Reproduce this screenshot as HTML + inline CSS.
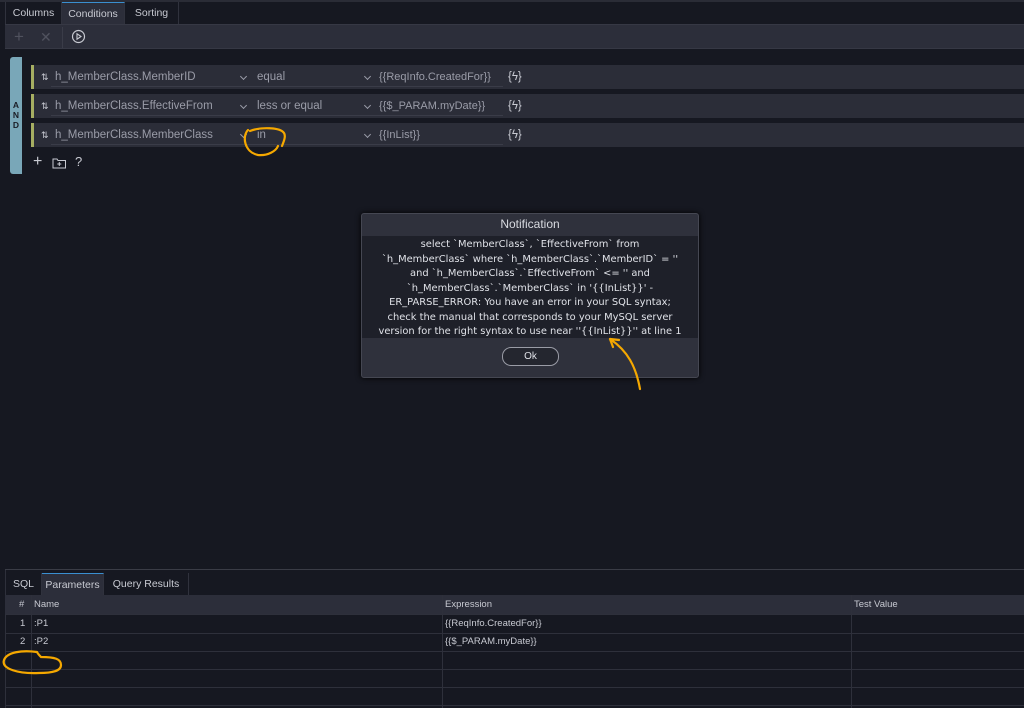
<!DOCTYPE html>
<html><head><meta charset="utf-8"><style>
*{margin:0;padding:0;box-sizing:border-box}
body{width:1024px;height:708px;background:#161821;font-family:"Liberation Sans","DejaVu Sans",sans-serif;color:#b8bac4;position:relative;overflow:hidden;font-size:11px}
.abs{position:absolute}
.tab{position:absolute;top:2px;height:22px;line-height:22px;font-size:10.5px;color:#c8cad2;text-align:center;border-right:1px solid #30323d;white-space:nowrap}
.row{position:absolute;left:31px;right:0;height:24px;background:#2b2d38}
.row .g{position:absolute;left:0;top:0;width:3px;height:24px;background:#a6ae62}
.row span{position:absolute;top:0;line-height:24px;font-size:11.5px;color:#9a9ca8}
.sel{position:absolute;top:3px;height:19px;border-bottom:1px solid #3a3c48}
.chev{position:absolute;top:9px;width:5px;height:5px;border-right:1.2px solid #9a9ca8;border-bottom:1.2px solid #9a9ca8;transform:rotate(45deg)}
.hl{position:absolute;left:5px;right:0;height:1px;background:#2e303b}
.vl{position:absolute;width:1px;background:#2e303b}
.cell{position:absolute;font-size:9.5px;color:#c8cad2;line-height:18px}
</style></head><body>
<div class="abs" style="left:0;top:0;width:1024px;height:2px;background:#2a2c36"></div>
<div class="tab" style="left:5px;width:57px;border-left:1px solid #30323d">Columns</div>
<div class="tab" style="left:62px;width:63px;background:#2c2e3a;border-top:1px solid #3a8fd0">Conditions</div>
<div class="tab" style="left:125px;width:54px">Sorting</div>
<div class="abs" style="left:5px;top:24px;width:1019px;height:25px;background:#2c2e3a;border-top:1px solid #363844;border-bottom:1px solid #363844"></div>
<div class="abs" style="left:14px;top:27px;font-size:17px;color:#50525e">+</div>
<div class="abs" style="left:40px;top:29px;font-size:14px;color:#50525e">✕</div>
<div class="abs" style="left:62px;top:27px;width:1px;height:21px;background:#3a3c48"></div>
<svg class="abs" style="left:71px;top:29px" width="15" height="15"><circle cx="7.5" cy="7.5" r="6" fill="none" stroke="#c8cad2" stroke-width="1.2"/><path d="M6 4.8v5.4l4-2.7z" fill="none" stroke="#c8cad2" stroke-width="1.1"/></svg>
<div class="abs" style="left:10px;top:57px;width:12px;height:117px;background:#79a7b8;border-radius:3px 0 0 3px"></div>
<div class="abs" style="left:10px;top:100px;width:12px;font-size:8.5px;font-weight:bold;color:#1a1c25;text-align:center;line-height:10px">A<br>N<br>D</div>
<div class="row" style="top:65px"><div class="g"></div><span style="left:10px;font-size:9px;color:#c8cad2">⇅</span><div class="sel" style="left:20px;width:222px"></div><span style="left:24px">h_MemberClass.MemberID</span><i class="chev" style="left:210px"></i><div class="sel" style="left:222px;width:125px"></div><span style="left:226px">equal</span><i class="chev" style="left:334px"></i><div class="sel" style="left:347px;width:125px"></div><span style="left:348px;font-size:11px">{{ReqInfo.CreatedFor}}</span><span style="left:477px;color:#c8cad2">{ϟ}</span></div>
<div class="row" style="top:94px"><div class="g"></div><span style="left:10px;font-size:9px;color:#c8cad2">⇅</span><div class="sel" style="left:20px;width:222px"></div><span style="left:24px">h_MemberClass.EffectiveFrom</span><i class="chev" style="left:210px"></i><div class="sel" style="left:222px;width:125px"></div><span style="left:226px">less or equal</span><i class="chev" style="left:334px"></i><div class="sel" style="left:347px;width:125px"></div><span style="left:348px;font-size:11px">{{$_PARAM.myDate}}</span><span style="left:477px;color:#c8cad2">{ϟ}</span></div>
<div class="row" style="top:123px"><div class="g"></div><span style="left:10px;font-size:9px;color:#c8cad2">⇅</span><div class="sel" style="left:20px;width:222px"></div><span style="left:24px">h_MemberClass.MemberClass</span><i class="chev" style="left:210px"></i><div class="sel" style="left:222px;width:125px"></div><span style="left:226px">in</span><i class="chev" style="left:334px"></i><div class="sel" style="left:347px;width:125px"></div><span style="left:348px;font-size:11px">{{InList}}</span><span style="left:477px;color:#c8cad2">{ϟ}</span></div>
<div class="abs" style="left:33px;top:154px;font-size:16px;color:#c8cad2;line-height:16px">+</div>
<svg class="abs" style="left:52px;top:157px" width="15" height="12"><path d="M1 2h4l1 1.5h7.5v7.5h-12.5z" fill="none" stroke="#c8cad2"/><path d="M7.3 5v4M5.3 7h4" stroke="#c8cad2"/></svg>
<div class="abs" style="left:75px;top:154px;font-size:13px;color:#c8cad2">?</div>
<div class="abs" style="left:361px;top:213px;width:338px;height:165px;background:#2f313c;border:1px solid #454752;border-radius:3px;box-shadow:0 0 6px #000"></div>
<div class="abs" style="left:362px;top:217px;width:336px;text-align:center;font-size:12px;color:#d8dae0">Notification</div>
<div class="abs" style="left:362px;top:236px;width:336px;height:102px;background:#1e2029;text-align:center;font-family:'DejaVu Sans',sans-serif;font-size:9.9px;line-height:14.5px;color:#e0e2e8;padding-top:2px;white-space:nowrap">select `MemberClass`, `EffectiveFrom` from<br>`h_MemberClass` where `h_MemberClass`.`MemberID` = ''<br>and `h_MemberClass`.`EffectiveFrom` &lt;= '' and<br>`h_MemberClass`.`MemberClass` in '{{InList}}' -<br>ER_PARSE_ERROR: You have an error in your SQL syntax;<br>check the manual that corresponds to your MySQL server<br>version for the right syntax to use near ''{{InList}}'' at line 1</div>
<div class="abs" style="left:502px;top:347px;width:57px;height:19px;border:1px solid #9a9ca6;border-radius:9px;background:#24262f;text-align:center;line-height:17px;font-size:10px;color:#e0e2e8">Ok</div>
<div class="abs" style="left:5px;top:569px;width:1019px;height:1px;background:#3a3c46"></div>
<div class="abs" style="left:5px;top:570px;width:1px;height:138px;background:#2e303b"></div>
<div class="tab" style="left:6px;top:573px;width:36px">SQL</div>
<div class="tab" style="left:42px;top:573px;width:62px;background:#2c2e3a;border-top:1px solid #3a8fd0">Parameters</div>
<div class="tab" style="left:104px;top:573px;width:85px">Query Results</div>
<div class="abs" style="left:5px;top:595px;width:1019px;height:19px;background:#2c2e3a"></div>
<div class="hl" style="top:614px"></div><div class="hl" style="top:633px"></div><div class="hl" style="top:651px"></div><div class="hl" style="top:669px"></div><div class="hl" style="top:687px"></div><div class="hl" style="top:705px"></div>
<div class="vl" style="left:31px;top:595px;height:113px"></div>
<div class="vl" style="left:442px;top:595px;height:113px"></div>
<div class="vl" style="left:851px;top:595px;height:113px"></div>
<div class="cell" style="left:19px;top:596px">#</div>
<div class="cell" style="left:34px;top:596px">Name</div>
<div class="cell" style="left:445px;top:596px">Expression</div>
<div class="cell" style="left:854px;top:596px">Test Value</div>
<div class="cell" style="left:20px;top:615px">1</div><div class="cell" style="left:34px;top:615px">:P1</div><div class="cell" style="left:445px;top:615px">{{ReqInfo.CreatedFor}}</div>
<div class="cell" style="left:20px;top:633px">2</div><div class="cell" style="left:34px;top:633px">:P2</div><div class="cell" style="left:445px;top:633px">{{$_PARAM.myDate}}</div>
<svg class="abs" style="left:0;top:0" width="1024" height="708">
<g fill="none" stroke="#f5a800" stroke-width="2.2" stroke-linecap="round">
<path d="M248 130c-6 6-4 22 10 25c10 1 18-4 20-9M250 131c10-4 30-4 34 2c2 3 0 8-2 13"/>
<path d="M640 389c-4-22-12-38-30-50M610 339l9 1M610 339l3 8"/>
<path d="M37 652c-15-2-30 0-33 8c-3 9 15 14 35 13c14 0 22-2 22-8c0-6-6-8-20-8c-3-3-4-5-4-5"/>
</g></svg>
</body></html>
